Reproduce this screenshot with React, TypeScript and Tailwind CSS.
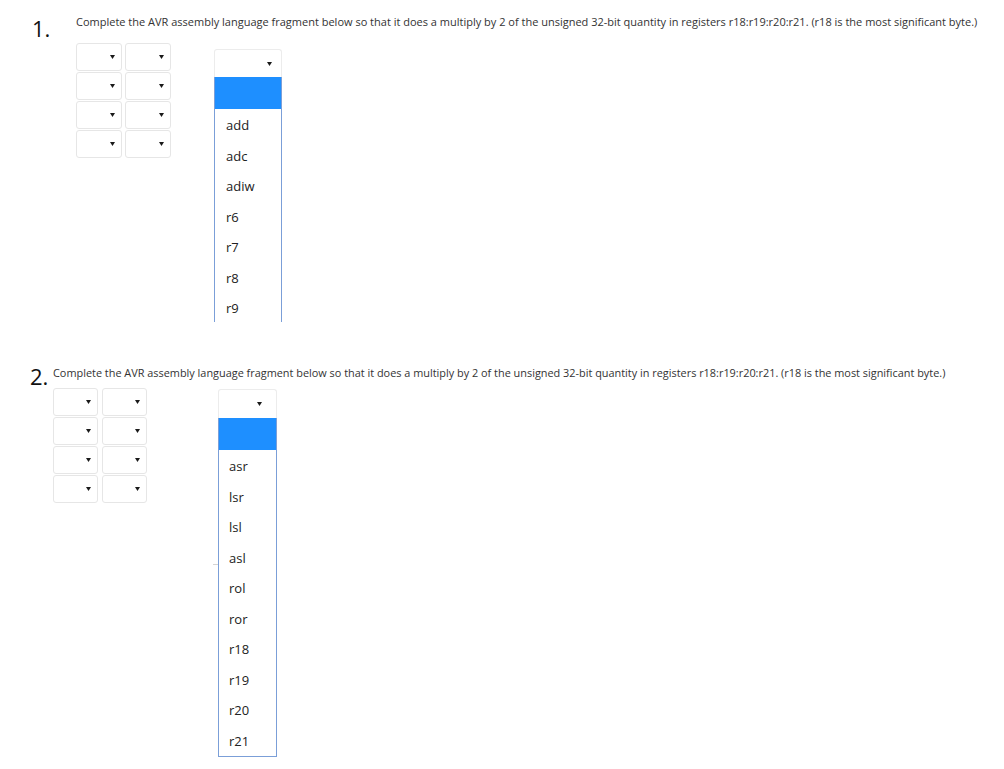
const QUESTION =
  "Complete the AVR assembly language fragment below so that it does a multiply by 2 of the unsigned 32-bit quantity in registers r18:r19:r20:r21. (r18 is the most significant byte.)";

function Arrow() {
  return (
    <svg width="5" height="4" viewBox="0 0 5 4" className="block">
      <path d="M0 0 L5 0 L2.5 4 Z" fill="#1a1a1a" />
    </svg>
  );
}

/** Small closed select in the 4x2 grid */
function SmallSelect({ w }: { w: string }) {
  return (
    <div
      className={`${w} h-[28px] rounded-[3px] border border-[#e6e6e6] bg-white flex items-center justify-end pr-[6px]`}
    >
      <Arrow />
    </div>
  );
}

function SelectGrid({ w, gap }: { w: string; gap: string }) {
  return (
    <div className={`grid grid-cols-2 ${gap} gap-y-[1px]`}>
      {Array.from({ length: 8 }).map((_, i) => (
        <SmallSelect key={i} w={w} />
      ))}
    </div>
  );
}

export default function App() {
  return (
    <div className="w-[1004px] h-[769px] bg-white overflow-hidden text-[#333] font-['Open_Sans',sans-serif]">
      {/* ── Pregunta 1 ─────────────────────────────────────────────── */}
      <div className="pl-[32px] pt-[15px]">
        <div className="flex items-start">
          <div className="w-[44px] mt-[2px] text-[22px] leading-[22px] text-[#111]">1.</div>
          <div className="text-[11px] leading-[14px]">{QUESTION}</div>
        </div>

        <div className="flex items-start ml-[44px] mt-[4px]">
          <SelectGrid w="w-[46px]" gap="gap-x-[3px]" />

          <div className="ml-[43px] mt-[6px] w-[68px]">
            <div className="h-[28px] border-x border-t border-[#ececec] rounded-t-[3px] bg-white flex items-center justify-end pr-[9px]">
              <Arrow />
            </div>
            {/* lista abierta, cortada después de r9 */}
            <div className="h-[245px] overflow-hidden border-x border-[#7b9fd8] text-[13px] text-[#222]">
              <div className="h-[32px] bg-[#1e8fff]" />
              <div className="pt-[1px]">
                {["add", "adc", "adiw", "r6", "r7", "r8", "r9"].map((o) => (
                  <div key={o} className="h-[30.5px] leading-[30.5px] pl-[11px]">
                    {o}
                  </div>
                ))}
              </div>
            </div>
          </div>
        </div>
      </div>

      {/* ── Pregunta 2 ─────────────────────────────────────────────── */}
      <div className="pl-[30px] mt-[43px]">
        <div className="flex items-start">
          <div className="w-[23px] text-[22px] leading-[22px] text-[#111]">2.</div>
          <div className="text-[10.9px] leading-[14px] mt-[1px]">{QUESTION}</div>
        </div>

        <div className="flex items-start ml-[23px] mt-[1px]">
          <SelectGrid w="w-[45px]" gap="gap-x-[4px]" />

          <div className="ml-[71px] mt-[1px] w-[59px]">
            <div className="h-[29px] border-x border-t border-[#ececec] rounded-t-[3px] bg-white flex items-center justify-end pr-[14px]">
              <Arrow />
            </div>
            <div className="relative border border-t-0 border-[#7b9fd8] text-[13px] text-[#222]">
              <div className="absolute -left-[6px] top-[146px] w-[5px] h-px bg-[#d4d4d4]" />
              <div className="h-[32px] bg-[#1e8fff]" />
              <div className="pt-[1px]">
                {["asr", "lsr", "lsl", "asl", "rol", "ror", "r18", "r19", "r20", "r21"].map((o) => (
                  <div key={o} className="h-[30.5px] leading-[30.5px] pl-[10px]">
                    {o}
                  </div>
                ))}
              </div>
            </div>
          </div>
        </div>
      </div>
    </div>
  );
}
